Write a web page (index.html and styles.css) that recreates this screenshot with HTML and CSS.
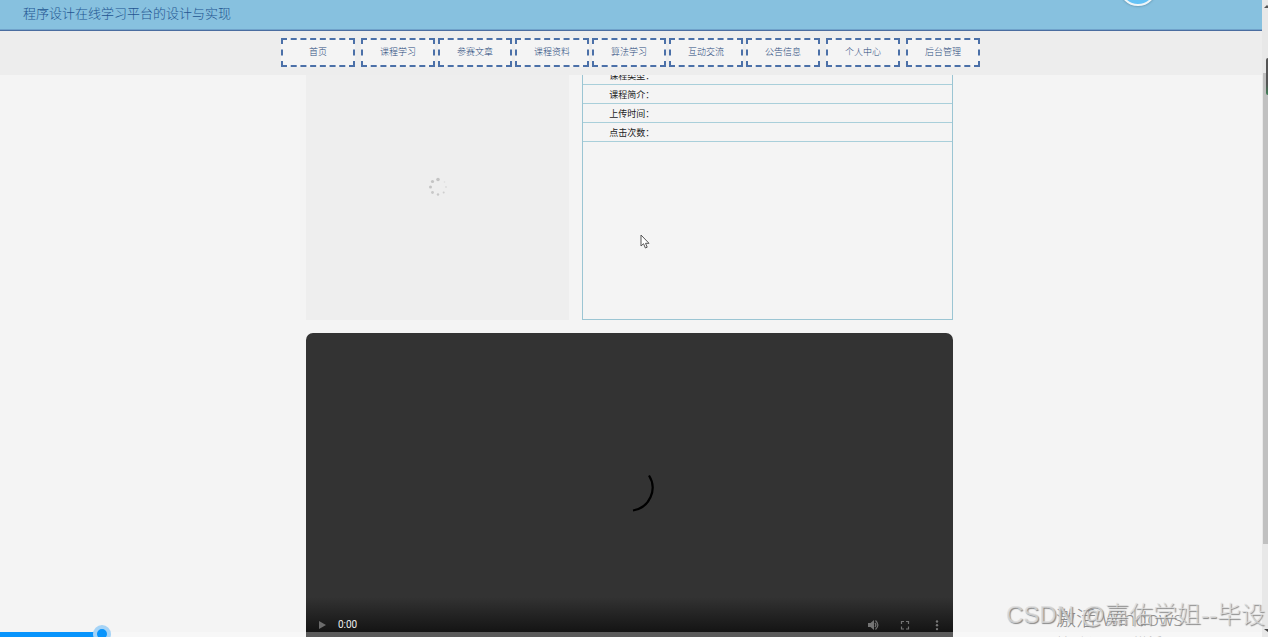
FILE: index.html
```html
<!DOCTYPE html>
<html lang="zh-CN">
<head>
<meta charset="utf-8">
<title>程序设计在线学习平台的设计与实现</title>
<link rel="stylesheet" href="styles.css">
</head>
<body>
<div class="page">
  <header class="header"><h1 class="title">程序设计在线学习平台的设计与实现</h1></header>
  <nav class="nav">
    <a class="nav-link" href="#">首页</a>
    <a class="nav-link spaced" href="#">课程学习</a>
    <a class="nav-link" href="#">参赛文章</a>
    <a class="nav-link" href="#">课程资料</a>
    <a class="nav-link" href="#">算法学习</a>
    <a class="nav-link" href="#">互动交流</a>
    <a class="nav-link" href="#">公告信息</a>
    <a class="nav-link spaced" href="#">个人中心</a>
    <a class="nav-link spaced" href="#">后台管理</a>
  </nav>
  <main class="viewport">
    <div class="content">
      <section class="course">
        <div class="cover">
          <svg class="dots" viewBox="0 0 20 20" aria-hidden="true">
            <circle cx="10" cy="2.500" r="1.800" fill="#c4c4c4"/>
            <circle cx="4.500" cy="4.500" r="1.600" fill="#c4c4c4"/>
            <circle cx="2.500" cy="10" r="1.500" fill="#c4c4c4"/>
            <circle cx="4.500" cy="15.500" r="1.400" fill="#c8c8c8"/>
            <circle cx="10" cy="17.500" r="1.200" fill="#c8c8c8"/>
            <circle cx="15.700" cy="15.500" r="1" fill="#cecece"/>
            <circle cx="18" cy="10" r=".9" fill="#dadada"/>
            <circle cx="16.500" cy="5" r=".8" fill="#dedede"/>
          </svg>
        </div>
        <dl class="details">
          <div class="row"><dt>课程类型：</dt><dd></dd></div>
          <div class="row"><dt>课程简介：</dt><dd></dd></div>
          <div class="row"><dt>上传时间：</dt><dd></dd></div>
          <div class="row"><dt>点击次数：</dt><dd></dd></div>
        </dl>
      </section>
      <section class="player" aria-label="课程视频">
        <svg class="spinner" viewBox="0 0 48 48" aria-hidden="true"><path d="M43 11.500A23 23 0 0 1 27 46.500" fill="none" stroke="#000" stroke-width="2.200"/></svg>
        <div class="controls">
          <button class="control" type="button" aria-label="播放"><svg viewBox="0 0 12 12"><path d="M3 2v8l7-4z" fill="#6c6c6c"/></svg></button>
          <span class="time">0:00</span>
          <button class="control" type="button" aria-label="音量"><svg viewBox="0 0 12 12"><path d="M1 4h2.500L7 1v10L3.500 8H1z" fill="#737373"/><path d="M8 4q1.800 2 0 4M8.500 1.500q4.800 4.500 0 9" fill="none" stroke="#737373" stroke-width="1.200"/></svg></button>
          <button class="control" type="button" aria-label="全屏"><svg viewBox="0 0 12 12"><path d="M2.500 5V2.500H5M7 2.500h2.500V5M9.500 7.500V10H7M5 10H2.500V7.500" fill="none" stroke="#737373" stroke-width="1.200"/></svg></button>
          <button class="control" type="button" aria-label="更多"><svg viewBox="0 0 12 12"><g fill="#777"><circle cx="6" cy="2.500" r="1.200"/><circle cx="6" cy="6.300" r="1.200"/><circle cx="6" cy="10.100" r="1.200"/></g></svg></button>
        </div>
      </section>
    </div>
  </main>
</div>
<div class="scrollbar" aria-hidden="true">
  <svg class="arrow" viewBox="0 0 6 4"><path d="M2 3l3-3 1 1v2z" fill="#555"/></svg>
  <div class="thumb"></div>
  <svg class="arrow" viewBox="0 0 6 4"><path d="M2 0h4v3z" fill="#444"/></svg>
</div>
<div class="side-tab" aria-hidden="true"></div>
<div class="bubble" aria-hidden="true"></div>
<svg class="cursor" viewBox="0 0 10 15" aria-hidden="true"><path d="M1 1v11l2.500-2.300L5.400 14l1.800-.8-1.700-3.900H9z" fill="#fff" stroke="#555"/></svg>
<div class="activation"><p>激活 Windows</p><p class="hint">转到“设置”以激活 Windows。</p></div>
<div class="watermark">CSDN @嘉佑学姐--毕设</div>
<input class="seek" type="range" min="0" max="1000" value="75" aria-label="播放进度">
<script src="script.js"></script>
</body>
</html>
```
FILE: styles.css
```css
* { box-sizing: border-box; }
body {
  position: relative;
  display: flex;
  height: 100vh;
  margin: 0;
  overflow: hidden;
  background: #f4f4f4;
  color: #222;
  font-family: "Noto Sans CJK SC", sans-serif;
  font-size: 9px;
  font-weight: 300;
}
.page { flex: 1; min-width: 0; display: flex; flex-direction: column; }
.header {
  flex: none;
  height: 31px;
  padding: 3px 23px;
  background: #87c1df;
  border-bottom: 1px solid #4b6da0;
  box-shadow: inset 0 -1px #70a2ca;
}
.title { margin: 0; color: #235591; font-size: 13px; font-weight: 300; line-height: 20px; }
.nav {
  flex: none;
  display: flex;
  justify-content: center;
  gap: 4px;
  padding: 7px 2px 8px 0;
  background: #ededed;
}
.nav-link {
  width: 74px;
  margin-right: -1px;
  border: 2px dashed #4b70a8;
  background: #f4f4f4;
  color: #2a4a7c;
  line-height: 24px;
  padding-bottom: 1px;
  text-align: center;
  text-decoration: none;
}
.spaced { margin-left: 3px; }
.viewport { flex: 1; min-height: 0; padding-right: 3px; overflow: hidden; }
.content { width: 51.4%; margin: -10px auto 0; }
.course { display: flex; gap: 13px; height: 255px; }
.cover { flex: 5; display: flex; justify-content: center; padding-top: 112px; background: #eee; }
.dots { width: 20px; height: 20px; }
.details { flex: 7; margin: 0; border: 1px solid #9bc5d3; }
.row {
  display: flex;
  height: 19px;
  padding-left: 26px;
  border-bottom: 1px solid #a9cfda;
  line-height: 19px;
  font-weight: 400;
}
.row dd { margin: 0; }
.player {
  display: flex;
  flex-direction: column;
  height: 364px;
  margin-top: 13px;
  border-radius: 7px;
  background: #333;
  overflow: hidden;
}
.spinner { width: 48px; height: 48px; margin: 131px auto 85px; }
.controls {
  flex: 1;
  display: flex;
  align-items: flex-start;
  gap: 20px;
  padding: 22px 10px 0;
  background: linear-gradient(#333, #141414 35px);
}
.control { width: 12px; height: 12px; padding: 0; border: 0; background: none; }
.control svg { display: block; width: 12px; height: 12px; }
.time {
  margin-left: -10px;
  margin-right: auto;
  color: #eee;
  font: 10px/12px Roboto, sans-serif;
}
.scrollbar {
  flex: none;
  display: flex;
  flex-direction: column;
  width: 6px;
  padding: 5px 0 4px;
  background: #e8e8e8;
}
.arrow { flex: none; width: 6px; height: 4px; }
.thumb { flex: none; height: 75%; margin: 64px 0 auto 1px; background: #c0c0c0; }
.side-tab {
  position: absolute;
  top: 58px;
  right: 0;
  width: 2px;
  height: 37px;
  border-radius: 2px 0 0 2px;
  background: linear-gradient(#555 70%, #3e8055);
}
.bubble {
  position: absolute;
  top: -32px;
  right: 111px;
  width: 38px;
  height: 38px;
  border: 2px solid #eef5f8;
  border-radius: 50%;
  background: #65c2f5;
  box-shadow: 0 1px 2px #6a9db8;
}
.cursor { position: absolute; top: 234px; left: 640px; width: 10px; height: 15px; }
.activation {
  position: absolute;
  top: 605px;
  right: 68px;
  width: 144px;
  color: #8c8c8c;
  font-family: "Open Sans", "Noto Sans CJK SC", sans-serif;
  font-size: 20px;
  line-height: 28px;
  white-space: nowrap;
}
.activation p { margin: 0; }
.activation .hint { font-size: 14px; line-height: 20px; }
.watermark {
  position: absolute;
  right: 3px;
  bottom: 4px;
  color: #dcdcdccc;
  font-family: "Liberation Sans", "Noto Sans CJK SC", sans-serif;
  font-size: 24px;
  line-height: 36px;
  text-shadow: 1px 1px 1px #888;
  white-space: nowrap;
}
.seek {
  position: absolute;
  left: 0;
  bottom: -6px;
  width: calc(100% - 6px);
  height: 18px;
  margin: 0;
  appearance: none;
  background:
    linear-gradient(#0894fc, #0894fc) 0 7px / 103px 11px no-repeat,
    linear-gradient(#ffffff4d, #ffffff4d) 0 7px / 100% 11px no-repeat;
}
.seek::-webkit-slider-thumb {
  appearance: none;
  width: 18px;
  height: 18px;
  border: 4px solid #a5d3f6;
  border-radius: 50%;
  background: #0894fc;
}
```
FILE: script.js
```js
const seek = document.querySelector(".seek");
seek.addEventListener("input", () => {
  const center = 9 + (seek.clientWidth - 18) * seek.value / 1000;
  seek.style.backgroundSize = `${center}px 11px, 100% 11px`;
});
```
